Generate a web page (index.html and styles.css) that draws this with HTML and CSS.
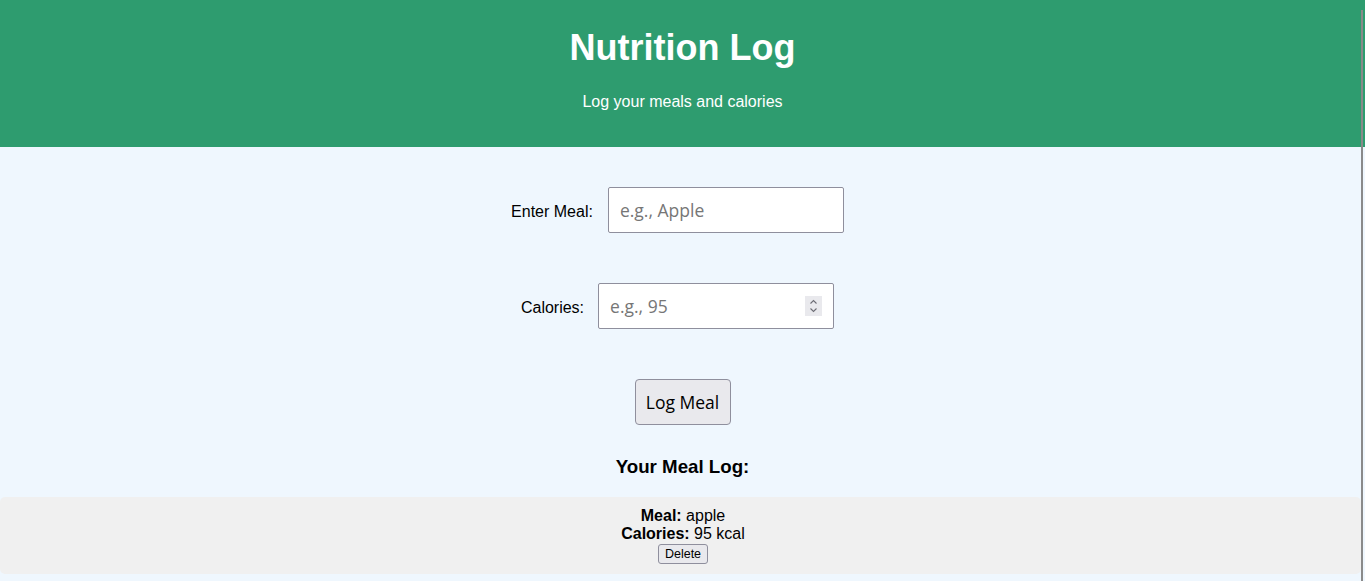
FILE: index.html
```html
<!DOCTYPE html>
<html lang="en">
<head>
<meta charset="utf-8">
<title>Nutrition Log</title>
<link rel="stylesheet" href="styles.css">
</head>
<body>
<header class="site-header">
  <h1 class="title">Nutrition Log</h1>
  <p class="subtitle">Log your meals and calories</p>
</header>
<main class="content">
  <form class="meal-form">
    <div class="form-row">
      <label class="form-label" for="meal">Enter Meal:</label>
      <input class="form-input" id="meal" type="text" placeholder="e.g., Apple">
    </div>
    <div class="form-row">
      <label class="form-label" for="cal">Calories:</label>
      <span class="number-wrap">
        <input class="form-input number-input" id="cal" type="number" placeholder="e.g., 95">
        <span class="spinner">
          <svg width="17" height="20" viewBox="0 0 17 20">
            <rect width="17" height="20" fill="#e9e9ed"/>
            <path d="M5.5 7.5 L8.5 4.5 L11.5 7.5" fill="none" stroke="#6d6d75" stroke-width="1.1"/>
            <path d="M5.5 12.5 L8.5 15.5 L11.5 12.5" fill="none" stroke="#6d6d75" stroke-width="1.1"/>
          </svg>
        </span>
      </span>
    </div>
    <div class="form-row">
      <button class="log-btn" type="button">Log Meal</button>
    </div>
  </form>
  <h3 class="log-title">Your Meal Log:</h3>
  <ul class="meal-list">
    <li class="meal-item">
      <div><strong>Meal:</strong> apple</div>
      <div><strong>Calories:</strong> 95 kcal</div>
      <button class="delete-btn" type="button">Delete</button>
    </li>
  </ul>
</main>
<div class="scroll-thumb"></div>
</body>
</html>
```

FILE: styles.css
```css
* { box-sizing: border-box; }
html, body {
  margin: 0;
  padding: 0;
}
body {
  background: #eff7fe;
  font-family: "Liberation Sans", Arial, sans-serif;
  color: #000;
  height: 581px;
  overflow: hidden;
}
.site-header {
  background: #2e9c6f;
  color: #fff;
  text-align: center;
  padding: 27px 0 36px;
}
.title {
  margin: 0 0 25px;
  font-size: 36px;
  line-height: 41px;
  font-weight: bold;
}
.subtitle {
  margin: 0;
  font-size: 16px;
  line-height: 18px;
}
.content {
  text-align: center;
}
.meal-form {
  padding-top: 40px;
  display: flex;
  flex-direction: column;
  gap: 50px;
}
.form-row {
  display: flex;
  justify-content: center;
  align-items: center;
  height: 46px;
}
.form-label {
  font-size: 16px;
  margin-right: 15px;
  padding-top: 3px;
}
.form-input {
  width: 236px;
  height: 46px;
  margin-right: 10px;
  border: 1px solid #8f8f9d;
  border-radius: 2px;
  background: #fff;
  padding: 0 11px;
  font-family: "Open Sans", "Noto Sans", sans-serif;
  font-size: 17.5px;
  color: #000;
}
.form-input::placeholder {
  color: #767676;
}
.number-wrap {
  position: relative;
  display: inline-block;
  height: 46px;
  margin-left: -1px;
}
.number-input {
  -moz-appearance: textfield;
  appearance: textfield;
}
.number-input::-webkit-inner-spin-button,
.number-input::-webkit-outer-spin-button {
  -webkit-appearance: none;
  margin: 0;
}
.spinner {
  position: absolute;
  left: 207px;
  top: 13px;
  width: 17px;
  height: 20px;
  line-height: 0;
}
.log-btn {
  width: 96px;
  height: 46px;
  font-family: "Open Sans", "Noto Sans", sans-serif;
  font-size: 17.5px;
  color: #000;
  background: #e9e9ed;
  border: 1px solid #8f8f9d;
  border-radius: 4px;
  padding: 0;
}
.log-title {
  margin: 31px 0 19px;
  font-size: 18.72px;
  line-height: 22px;
  font-weight: bold;
}
.meal-list {
  list-style: none;
  margin: 0 4px 0 0;
  padding: 0;
}
.meal-item {
  background: #f0f0f0;
  border-radius: 5px;
  padding: 10px 0 10px 5px;
  font-size: 16px;
  line-height: 18px;
  display: flex;
  flex-direction: column;
  align-items: center;
}
.delete-btn {
  margin-top: 1px;
  height: 20px;
  padding: 0 6px;
  font-family: "Liberation Sans", Arial, sans-serif;
  font-size: 12.5px;
  color: #000;
  background: #e9e9ed;
  border: 1px solid #8f8f9d;
  border-radius: 3px;
}
.scroll-thumb {
  position: fixed;
  right: 2px;
  top: 10px;
  bottom: 0;
  width: 2px;
  background: #8a8a8a;
}
```
